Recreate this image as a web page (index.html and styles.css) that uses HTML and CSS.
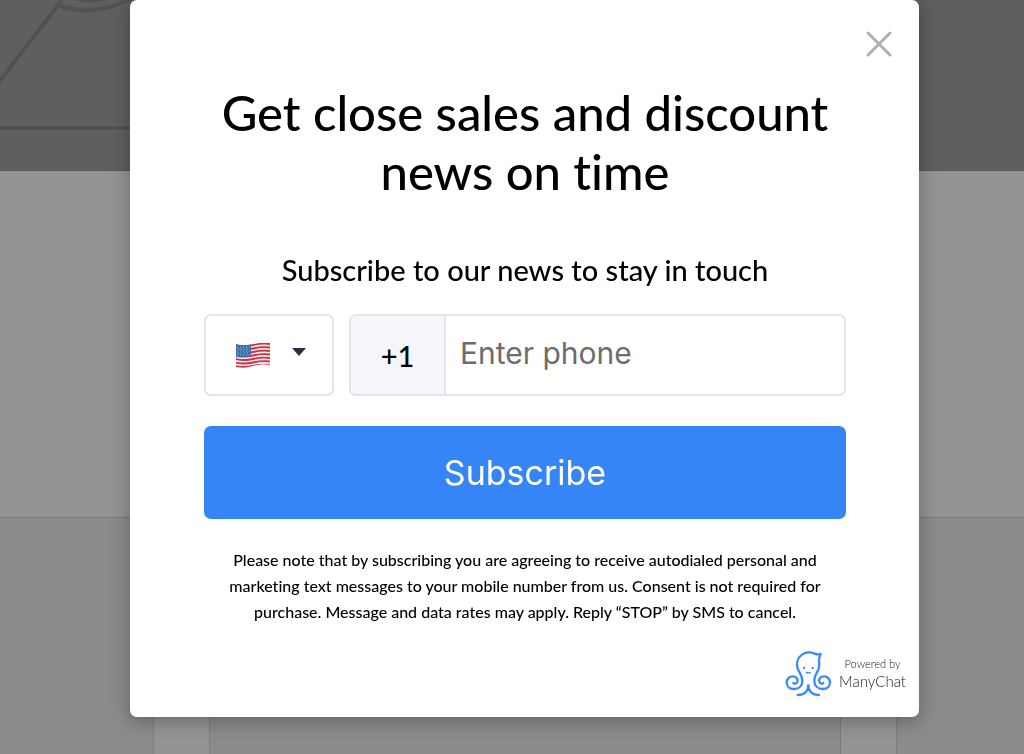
FILE: index.html
```html
<!DOCTYPE html>
<html lang="en">
<head>
<meta charset="utf-8">
<meta name="viewport" content="width=device-width, initial-scale=1">
<title>Subscribe</title>
<link rel="stylesheet" href="styles.css">
</head>
<body>
<div class="page" aria-hidden="true">
  <div class="hero">
    <svg width="400" height="170" viewBox="0 0 400 170" fill="none" stroke="#515254" stroke-width="4">
      <path d="M-2 83 62 0M58 5Q94 18 132 -2M76 -2Q90 3 106 -2M0 128H400"/>
    </svg>
  </div>
  <div class="band"></div>
  <div class="tiles">
    <div class="tile"></div>
    <div class="tile"></div>
    <div class="tile"></div>
  </div>
</div>
<main class="overlay">
  <section class="modal" role="dialog" aria-labelledby="title">
    <button class="close" type="button" aria-label="Close">
      <svg width="28" height="28" viewBox="0 0 28 28" fill="none" stroke="#b0b0b0" stroke-width="3" stroke-linecap="round"><path d="M3 3 25 25M25 3 3 25"/></svg>
    </button>
    <h1 class="title" id="title">Get close sales and discount news on time</h1>
    <form class="form">
      <p class="lead">Subscribe to our news to stay in touch</p>
      <div class="fields">
        <div class="country">
          <select class="country-select" aria-label="Country"><option>US</option></select>
          <svg class="flag" width="36" height="28" viewBox="0 0 36 28" aria-hidden="true">
            <defs><clipPath id="wave"><path d="M1 3Q9 5 18 3T35 2V24Q27 22 18 25T1 26Z"/></clipPath></defs>
            <g clip-path="url(#wave)">
              <path fill="#f2eff0" d="M0 0H36V28H0Z"/>
              <path fill="none" stroke="#cf3242" stroke-width="1.8" d="M1 4Q9 6 18 4T35 3M1 7.500Q9 9.500 18 7.500T35 6.500M1 11Q9 13 18 11T35 10M1 14.500Q9 16.500 18 14.500T35 13.500M1 18Q9 20 18 18T35 17M1 21.500Q9 23.500 18 21.500T35 20.500M1 25Q9 27 18 25T35 24"/>
              <path fill="#3f6da8" d="M1 3Q9 5 16 3V15Q8 17 1 16Z"/>
              <path stroke="#9fb8d8" stroke-width="1" stroke-dasharray="1 2" d="M2 6H15M3 8H15M2 10H15M3 12H15M2 14H15"/>
            </g>
          </svg>
          <svg class="caret" width="14" height="8" viewBox="0 0 14 8" aria-hidden="true"><path fill="#28303f" d="M0 0H14L7 8Z"/></svg>
        </div>
        <div class="phone">
          <label class="code" for="phone">+1</label>
          <input class="phone-input" id="phone" type="tel" placeholder="Enter phone">
        </div>
      </div>
      <button class="submit" type="submit">Subscribe</button>
    </form>
    <p class="note">Please note that by subscribing you are agreeing to receive autodialed personal and marketing text messages to your mobile number from us. Consent is not required for purchase. Message and data rates may apply. Reply “STOP” by SMS to cancel.</p>
    <a class="brand" href="#">
      <svg width="52" height="52" viewBox="0 0 156 156" fill="none" stroke="#3a8bfa" stroke-width="7" stroke-linecap="round" stroke-linejoin="round" aria-hidden="true">
        <path d="M115 15C108 18 103 16 98 14C86 9 70 10 60 17C46 27 42 44 47 59C51 71 61 79 61 95C61 110 51 120 36 120C22 120 14 111 14 100C14 90 22 82 32 82C42 82 49 90 46 98C43 104 38 106 34 102"/>
        <path d="M115 15C114 23 110 28 111 36C113 48 112 58 106 68C101 76 97 84 97 95C97 110 107 120 122 120C136 120 144 111 144 100C144 90 136 82 126 82C116 82 109 90 112 98C115 104 120 106 124 102"/>
        <path d="M79 109C79 126 67 138 47 138M79 109C79 126 91 138 111 138"/>
        <path stroke-width="4" d="M73 70Q79 73 85 70"/>
        <g fill="#3a8bfa" stroke="none"><circle cx="66" cy="57" r="3.500"/><circle cx="92" cy="57" r="3.500"/></g>
      </svg>
      <span class="brand-text"><span class="brand-small">Powered by</span><span class="brand-name">ManyChat</span></span>
    </a>
  </section>
</main>
</body>
</html>
```
FILE: styles.css
```css
* { box-sizing: border-box; }
body { margin: 0; background: #949494; font-family: Lato, sans-serif; font-variant-ligatures: none; color: #000; }
.page { position: fixed; inset: 0; display: flex; flex-direction: column; }
.hero { height: 171px; overflow: hidden; background: #5f5f61; border-bottom: 1px solid #555657; }
.band { height: 346px; }
.tiles { flex: 1; display: grid; grid-template-columns: 154fr 631fr 128fr; gap: 55px; border-top: 1px solid #7c7d7c; }
.tile { background: #8a8c8a; border: 1px solid #7c7d7c; border-width: 0 1px; }
.tile:first-child { border-left: 0; }
.tile:last-child { border-right: 0; }
.overlay { position: relative; padding: 0 105px 37px 130px; }
.modal { position: relative; padding: 83px 73px 16px 74px; background: #fff; border-radius: 7px; box-shadow: 0 4px 20px rgba(0, 0, 0, 0.3); text-align: center; }
.close { position: absolute; top: 30px; right: 26px; padding: 0; border: 0; background: none; line-height: 0; cursor: pointer; }
.title { margin: 0; font-size: 49px; line-height: 59px; font-weight: 500; }
.lead { margin: 50px 0 25px; font-size: 29px; line-height: 38px; font-weight: 500; }
.fields { display: flex; gap: 15px; height: 82px; }
.country { position: relative; width: 130px; }
.country-select { width: 100%; height: 100%; appearance: none; border: 2px solid #e3e5eb; border-radius: 7px; background: #fff; color: transparent; }
.flag, .caret { position: absolute; pointer-events: none; }
.flag { left: 31px; top: 27px; }
.caret { left: 88px; top: 34px; }
.phone { flex: 1; display: flex; min-width: 0; border: 2px solid #e3e5eb; border-radius: 7px; overflow: hidden; }
.code { display: grid; place-items: center; width: 95px; border-right: 2px solid #e3e5eb; background: #f5f6f9; font-size: 29px; font-weight: 500; }
.phone-input { flex: 1; min-width: 0; padding: 0 14px 4px; border: 0; background: #fff; font: 30px Inter, sans-serif; color: #000; }
.phone-input::placeholder { color: #6d6d6d; }
.submit { display: block; width: 100%; height: 93px; margin-top: 30px; border: 0; border-radius: 7px; background: #3585f7; color: #fff; font: 34px Inter, sans-serif; cursor: pointer; }
.note { margin: 28px 16px 0; font-size: 16px; line-height: 26px; font-weight: 500; }
.brand { display: flex; width: max-content; margin: 24px -60px 0 auto; gap: 5px; align-items: center; color: #222; text-decoration: none; }
.brand-text { display: grid; padding-bottom: 4px; font-weight: 300; }
.brand-small { font-size: 11px; line-height: 16px; }
.brand-name { font-size: 15px; line-height: 18px; }
```
